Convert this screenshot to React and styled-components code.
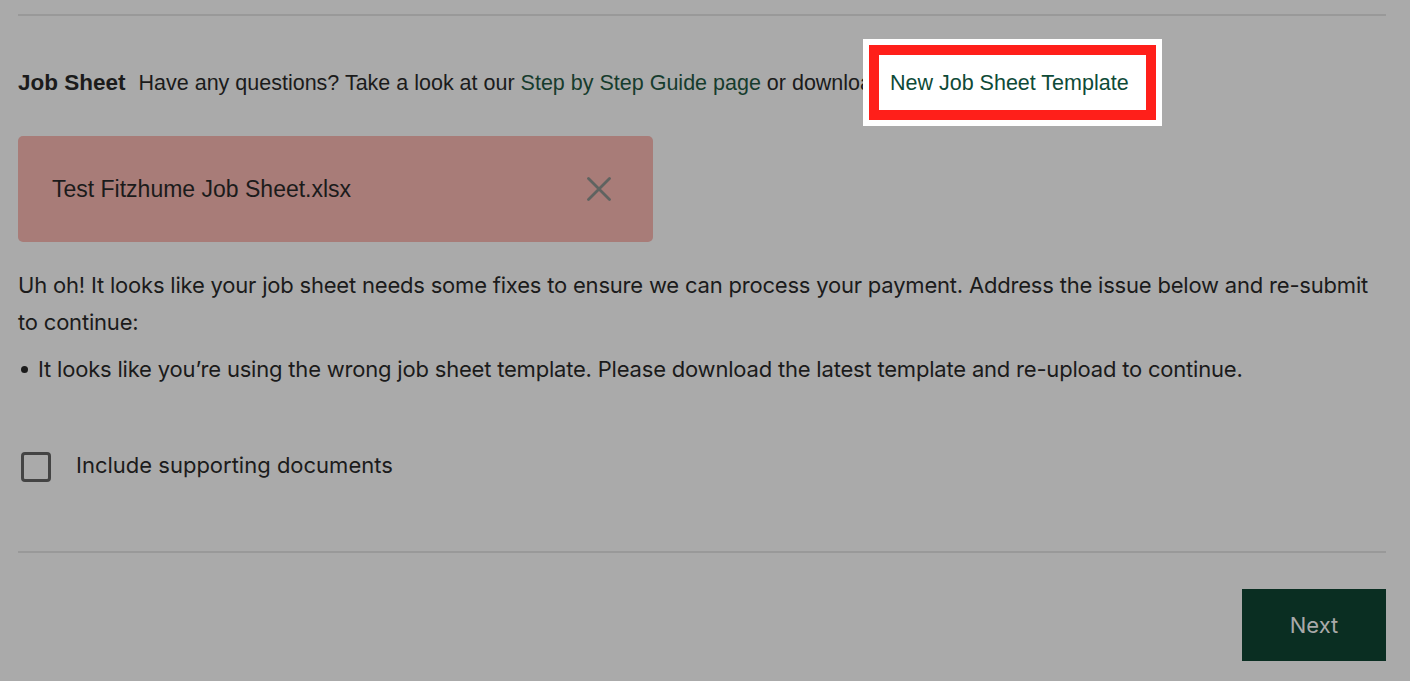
import React, { useState } from "react";
import styled, { createGlobalStyle } from "styled-components";

const GlobalStyle = createGlobalStyle`
  html, body {
    margin: 0;
    padding: 0;
    background: #aaaaaa;
  }
  body {
    font-family: "Liberation Sans", Arial, sans-serif;
    color: #1b1b1b;
  }
`;

const Page = styled.div`
  display: flex;
  flex-direction: column;
  padding: 14px 24px 20px 18px;
  min-height: 681px;
  box-sizing: border-box;
`;

const Rule = styled.hr`
  margin: ${(p) => p.$top || 0}px 0 0;
  border: 0;
  height: 2px;
  background: #999999;
`;

const HeaderRow = styled.div`
  margin-top: 52px;
  line-height: 30px;
  font-size: 21.5px;
  white-space: nowrap;
`;

const Title = styled.span`
  font-weight: 700;
  font-size: 22.5px;
  margin-right: 7px;
`;

const TextLink = styled.a`
  color: ${(p) => (p.$spotlight ? "#0e4a37" : "#163c2d")};
  text-decoration: none;
  cursor: pointer;
  ${(p) =>
    p.$spotlight &&
    `
    position: relative;
    z-index: 1;
    &::before {
      content: "";
      position: absolute;
      top: -26px;
      bottom: -25px;
      left: -21px;
      right: -27px;
      border: 10px solid #ff1f1a;
      background: #ffffff;
      box-shadow: 0 0 0 6px #ffffff;
      z-index: -1;
    }
  `}
`;

const FileCard = styled.div`
  margin-top: 38px;
  width: 635px;
  height: 106px;
  box-sizing: border-box;
  padding: 0 42px 0 34px;
  display: flex;
  align-items: center;
  justify-content: space-between;
  background: #a87c78;
  border-radius: 5px;
`;

const FileName = styled.span`
  font-size: 23px;
  color: #1b1b1b;
`;

const CloseButton = styled.button`
  border: 0;
  padding: 0;
  background: none;
  width: 24px;
  height: 24px;
  display: flex;
  cursor: pointer;
`;

const Message = styled.p`
  margin: 25px 0 0;
  font-family: Inter, "Noto Sans", sans-serif;
  font-size: 22px;
  line-height: 37px;
  letter-spacing: -0.2px;
  max-width: 1360px;
`;

const IssueList = styled.ul`
  margin: 10px 0 0;
  padding: 0;
  list-style: none;
  font-family: Inter, "Noto Sans", sans-serif;
  font-size: 22px;
  line-height: 37px;
  letter-spacing: -0.2px;
`;

const Issue = styled.li`
  display: flex;
  align-items: center;
  &::before {
    content: "";
    width: 7px;
    height: 7px;
    border-radius: 50%;
    background: #1b1b1b;
    margin: 0 10px 0 3px;
    flex: none;
  }
`;

const CheckRow = styled.label`
  margin-top: 64px;
  display: flex;
  align-items: center;
  gap: 25px;
  padding-left: 3px;
  font-family: Inter, "Noto Sans", sans-serif;
  font-size: 22px;
  cursor: pointer;
`;

const Box = styled.span`
  width: 30px;
  height: 30px;
  box-sizing: border-box;
  border: 3px solid #444444;
  border-radius: 4px;
  display: flex;
  align-items: center;
  justify-content: center;
  background: ${(p) => (p.$checked ? "#0a2e22" : "transparent")};
`;

const LabelText = styled.span`
  position: relative;
  top: -2px;
`;

const Footer = styled.div`
  margin-top: 36px;
  display: flex;
  justify-content: flex-end;
`;

const NextButton = styled.button`
  width: 144px;
  height: 72px;
  border: 0;
  background: #0a2e22;
  color: #a9a9a9;
  font-family: Inter, "Noto Sans", sans-serif;
  font-size: 22px;
  cursor: pointer;
`;

function App() {
  const [supporting, setSupporting] = useState(false);

  return (
    <Page>
      <GlobalStyle />
      <Rule />
      <HeaderRow>
        <Title>Job Sheet</Title> Have any questions? Take a look at our{" "}
        <TextLink>Step by Step Guide page</TextLink> or download{" "}
        <TextLink $spotlight>New Job Sheet Template</TextLink>
      </HeaderRow>

      <FileCard>
        <FileName>Test Fitzhume Job Sheet.xlsx</FileName>
        <CloseButton aria-label="Remove file">
          <svg width="24" height="24" viewBox="0 0 24 24">
            <path
              d="M1.5 1.5 L22.5 22.5 M22.5 1.5 L1.5 22.5"
              stroke="#5f6360"
              strokeWidth="2.8"
              strokeLinecap="round"
            />
          </svg>
        </CloseButton>
      </FileCard>

      <Message>
        Uh oh! It looks like your job sheet needs some fixes to ensure we can
        process your payment. Address the issue below and re-submit to
        continue:
      </Message>
      <IssueList>
        <Issue>
          It looks like you’re using the wrong job sheet template. Please
          download the latest template and re-upload to continue.
        </Issue>
      </IssueList>

      <CheckRow onClick={() => setSupporting(!supporting)}>
        <Box $checked={supporting} />
        <LabelText>Include supporting documents</LabelText>
      </CheckRow>

      <Rule $top={69} />

      <Footer>
        <NextButton>Next</NextButton>
      </Footer>
    </Page>
  );
}

export default App;
